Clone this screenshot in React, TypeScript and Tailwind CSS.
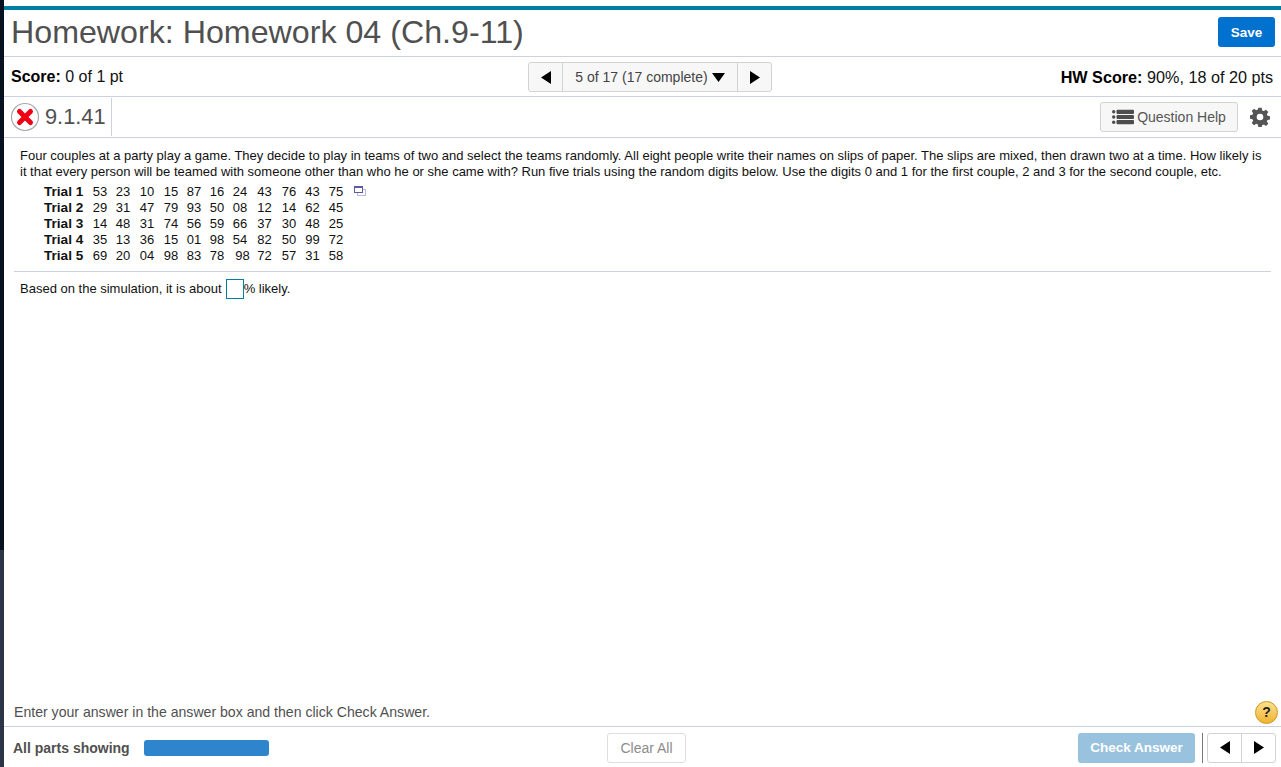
import React from "react";

const trials = [
  ["53", "23", "10", "15", "87", "16", "24", "43", "76", "43", "75"],
  ["29", "31", "47", "79", "93", "50", "08", "12", "14", "62", "45"],
  ["14", "48", "31", "74", "56", "59", "66", "37", "30", "48", "25"],
  ["35", "13", "36", "15", "01", "98", "54", "82", "50", "99", "72"],
  ["69", "20", "04", "98", "83", "78", "98", "72", "57", "31", "58"],
];

const Triangle = ({ dir }: { dir: "left" | "right" | "down" }) => {
  if (dir === "left") {
    return (
      <svg width="10" height="13" viewBox="0 0 10 13">
        <path d="M10 0V13L0 6.5Z" fill="#000" />
      </svg>
    );
  }
  if (dir === "right") {
    return (
      <svg width="10" height="13" viewBox="0 0 10 13">
        <path d="M0 0V13L10 6.5Z" fill="#000" />
      </svg>
    );
  }
  return (
    <svg width="13" height="9" viewBox="0 0 13 9">
      <path d="M0 0H13L6.5 9Z" fill="#000" />
    </svg>
  );
};

const App: React.FC = () => {
  return (
    <div className="flex h-[767px] w-[1281px] overflow-hidden bg-white font-['Liberation_Sans',Arial,sans-serif]">
      {/* window edge */}
      <div className="flex w-[4px] shrink-0 flex-col">
        <div className="h-[550px] bg-[#07111f]" />
        <div className="flex-1 bg-[#2b3547]" />
      </div>

      <div className="flex min-w-0 flex-1 flex-col pt-[6px]">
        <div className="h-[4px] bg-[#007fa3]" />

        {/* Title */}
        <div className="flex h-[47px] items-center justify-between border-b border-[#cdd1df] pl-[7px] pr-[6px]">
          <h1 className="pb-[1px] text-[32.2px] leading-none text-[#505050]">Homework: Homework 04 (Ch.9-11)</h1>
          <button className="mb-[2px] h-[30px] w-[57px] rounded-[3px] bg-[#0071ce] pt-[2px] text-[13.5px] font-bold text-white">
            Save
          </button>
        </div>

        {/* Score row */}
        <div className="relative flex h-[40px] items-center justify-between border-b border-[#cdd1df] pl-[7px] pr-[8px] pt-px text-base text-[#111]">
          <div>
            <span className="font-bold text-black">Score:</span> 0 of 1 pt
          </div>
          <div className="absolute left-[524px] top-[5px] flex h-[30px] w-[244px] items-center rounded-[3px] border border-[#d3d3d3] bg-[#f7f7f7]">
            <div className="flex h-full w-[34px] items-center justify-center border-r border-[#d3d3d3]">
              <Triangle dir="left" />
            </div>
            <div className="flex h-full w-[175px] items-center justify-center gap-[4px] border-r border-[#d3d3d3] text-sm text-[#444]">
              5 of 17 (17 complete)
              <Triangle dir="down" />
            </div>
            <div className="flex h-full flex-1 items-center justify-center">
              <Triangle dir="right" />
            </div>
          </div>
          <div className="text-[16.2px]">
            <span className="font-bold text-black">HW Score:</span> 90%, 18 of 20 pts
          </div>
        </div>

        {/* Question id row */}
        <div className="flex h-[41px] items-center justify-between border-b border-[#cdd1df] pl-[6px] pr-[11px]">
          <div className="flex h-full items-center py-[1px]">
            <svg width="30" height="30" viewBox="0 0 30 30">
              <circle cx="15" cy="15" r="13.5" fill="#fff" stroke="#a8a8a8" strokeWidth="1.2" />
              <path d="M9.5 9.5L20.5 20.5M20.5 9.5L9.5 20.5" stroke="#f00012" strokeWidth="5" strokeLinecap="round" />
            </svg>
            <span className="ml-[5px] text-[21.8px] leading-none text-[#505050]">9.1.41</span>
            <div className="ml-[5px] h-full w-px bg-[#cdd1df]" />
          </div>
          <div className="flex items-center gap-[12px]">
            <button className="flex h-[30px] w-[138px] items-center justify-center gap-[3px] rounded-[3px] border border-[#d3d3d3] bg-[#f7f7f7] text-sm text-[#555]">
              <svg width="22" height="16" viewBox="0 0 22 16" fill="#4d4d4d">
                <rect x="0" y="1" width="3.4" height="3.4" rx="1.7" />
                <rect x="0" y="6.3" width="3.4" height="3.4" rx="1.7" />
                <rect x="0" y="11.6" width="3.4" height="3.4" rx="1.7" />
                <rect x="4.500" y="0.800" width="17.500" height="4.200" rx="1" />
                <rect x="4.500" y="5.900" width="17.500" height="4.200" rx="1" />
                <rect x="4.500" y="11" width="17.500" height="4.200" rx="1" />
              </svg>
              Question Help
            </button>
            <svg width="20" height="20" viewBox="0 0 24 24" fill="#555">
              <path
                fillRule="evenodd"
                d="M10 1h4l.6 3.100 2 .8L19.200 3.200 22 6l-1.800 2.600.9 2L24 11v4l-3 .5-.8 2 1.800 2.500L19.200 22.800 16.600 21l-2 .9L14 24h-4l-.6-2.900-2-.9L4.800 22 2 19.200l1.800-2.600-.8-1.900L0 14v-4l3-.6.8-2L2 4.800 4.800 2l2.600 1.800 2-.8L10 1ZM12 8a4 4 0 1 0 0 8 4 4 0 0 0 0-8Z"
              />
            </svg>
          </div>
        </div>

        {/* Question body */}
        <div className="flex min-h-0 flex-1 flex-col px-[10px] text-[13px] text-[#111]">
          <p className="mt-[10px] pl-[6px] pr-[2px] leading-[16px]">
            Four couples at a party play a game. They decide to play in teams of two and select the teams randomly. All eight people write their names on slips of paper. The slips are mixed, then drawn two at a time. How likely is it that every person will be teamed with someone other than who he or she came with? Run five trials using the random digits below. Use the digits 0 and 1 for the first couple, 2 and 3 for the second couple, etc.
          </p>
          <div className="mt-[4px] pl-[30px] leading-[16px]">
            {trials.map((row, i) => (
              <div key={i} className="flex items-center">
                <span className="w-[44.5px] whitespace-nowrap text-[13.6px] font-bold">Trial {i + 1}</span>
                <div className="grid grid-cols-[23px_23px_25px_23px_23px_23px_23px_26px_23px_24px_23px] text-center">
                  {row.map((n, j) => (
                    <span key={j} className={i === 4 && j === 6 ? "pl-[5px]" : ""}>
                      {n}
                    </span>
                  ))}
                </div>
                {i === 0 && (
                  <svg className="ml-[6px] -mt-[3px]" width="12" height="10" viewBox="0 0 12 10" fill="none">
                    <rect x="3.500" y="3.500" width="8" height="6" stroke="#b9b9dd" />
                    <rect x="0.500" y="0.500" width="8" height="6" fill="#fff" stroke="#5a5aa8" />
                    <rect x="0" y="0" width="9" height="2" fill="#5a5aa8" />
                  </svg>
                )}
              </div>
            ))}
          </div>
          <div className="mt-[7px] h-px bg-[#cdd1df]" />
          <div className="mt-[7px] flex items-center pl-[6px] leading-[20px]">
            Based on the simulation, it is about
            <span className="ml-[4px] h-[20px] w-[18px] border border-[#007fa3] bg-white" />
            % likely.
          </div>
          <div className="mt-auto flex h-[28px] items-center justify-between text-[14.1px] text-[#505050]">
            <span className="pt-[2px]">Enter your answer in the answer box and then click Check Answer.</span>
            <span className="-mr-[7px] flex h-[23px] w-[23px] items-center justify-center rounded-full border border-[#c9971c] bg-gradient-to-b from-[#fde08a] to-[#f0b429] text-sm font-bold text-[#222]">
              ?
            </span>
          </div>
        </div>

        {/* Footer */}
        <div className="relative flex h-[41px] items-center border-t border-[#cdd1df] pl-[9px] pr-[5px] pt-px">
          <span className="w-[131px] text-sm font-bold text-[#505050]">All parts showing</span>
          <div className="h-[16px] w-[125px] rounded-[3px] bg-[#2f85cd]" />
          <button className="ml-[338px] h-[30px] w-[79px] rounded-[3px] border border-[#dedede] bg-white text-sm text-[#8c8c8c]">
            Clear All
          </button>
          <button className="ml-auto h-[30px] w-[117px] rounded-[3px] bg-[#98c2de] pt-[2px] text-[13.5px] font-bold text-white">
            Check Answer
          </button>
          <div className="ml-[7px] h-[30px] w-px bg-[#777]" />
          <div className="ml-[4px] flex h-[30px] w-[69px] items-center rounded-[3px] border border-[#d3d3d3] bg-white">
            <div className="flex h-full w-[34px] items-center justify-center border-r border-[#d3d3d3]">
              <Triangle dir="left" />
            </div>
            <div className="flex h-full flex-1 items-center justify-center">
              <Triangle dir="right" />
            </div>
          </div>
        </div>
      </div>
    </div>
  );
};

export default App;
